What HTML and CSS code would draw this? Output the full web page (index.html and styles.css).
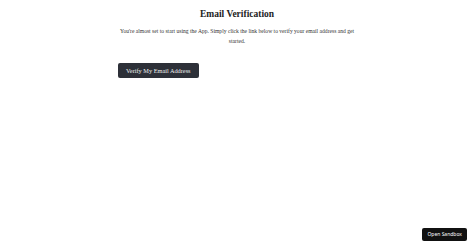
FILE: index.html
```html
<!DOCTYPE html>
<html>
<head>
<meta charset="utf-8">
<link rel="stylesheet" href="styles.css">
</head>
<body>
<div class="container">
  <h1 class="title">Email Verification</h1>
  <p class="text">You're almost set to start using the App. Simply click the link below to verify your email address and get started.</p>
  <a class="btn" href="#">Verify My Email Address</a>
</div>
<a class="sandbox" href="#">Open Sandbox</a>
</body>
</html>
```
FILE: styles.css
```css
html, body {
  margin: 0;
  padding: 0;
  background: #ffffff;
}
body {
  font-family: "Liberation Serif", "Times New Roman", serif;
  color: #1a1a1a;
  width: 474px;
  height: 248px;
  position: relative;
}
.container {
  width: 238px;
  margin: 0 auto;
  padding-top: 8px;
  display: flex;
  flex-direction: column;
}
.title {
  font-size: 9.5px;
  font-weight: bold;
  text-align: center;
  margin: 0;
  line-height: 12px;
  color: #222;
}
.text {
  font-size: 5.6px;
  line-height: 10px;
  text-align: center;
  margin: 6px 0 0 0;
  color: #333;
}
.btn {
  align-self: flex-start;
  margin-top: 17px;
  background: #2d3038;
  color: #f0f0f0;
  font-size: 6.3px;
  text-decoration: none;
  padding: 0 8px;
  height: 15px;
  line-height: 15px;
  border-radius: 2px;
}
.sandbox {
  position: absolute;
  right: 7px;
  bottom: 7px;
  background: #111;
  color: #fff;
  font-family: "Noto Sans", "Open Sans", sans-serif;
  font-size: 5px;
  text-decoration: none;
  padding: 0 5px;
  height: 13px;
  line-height: 13px;
  border-radius: 2px;
}
```
